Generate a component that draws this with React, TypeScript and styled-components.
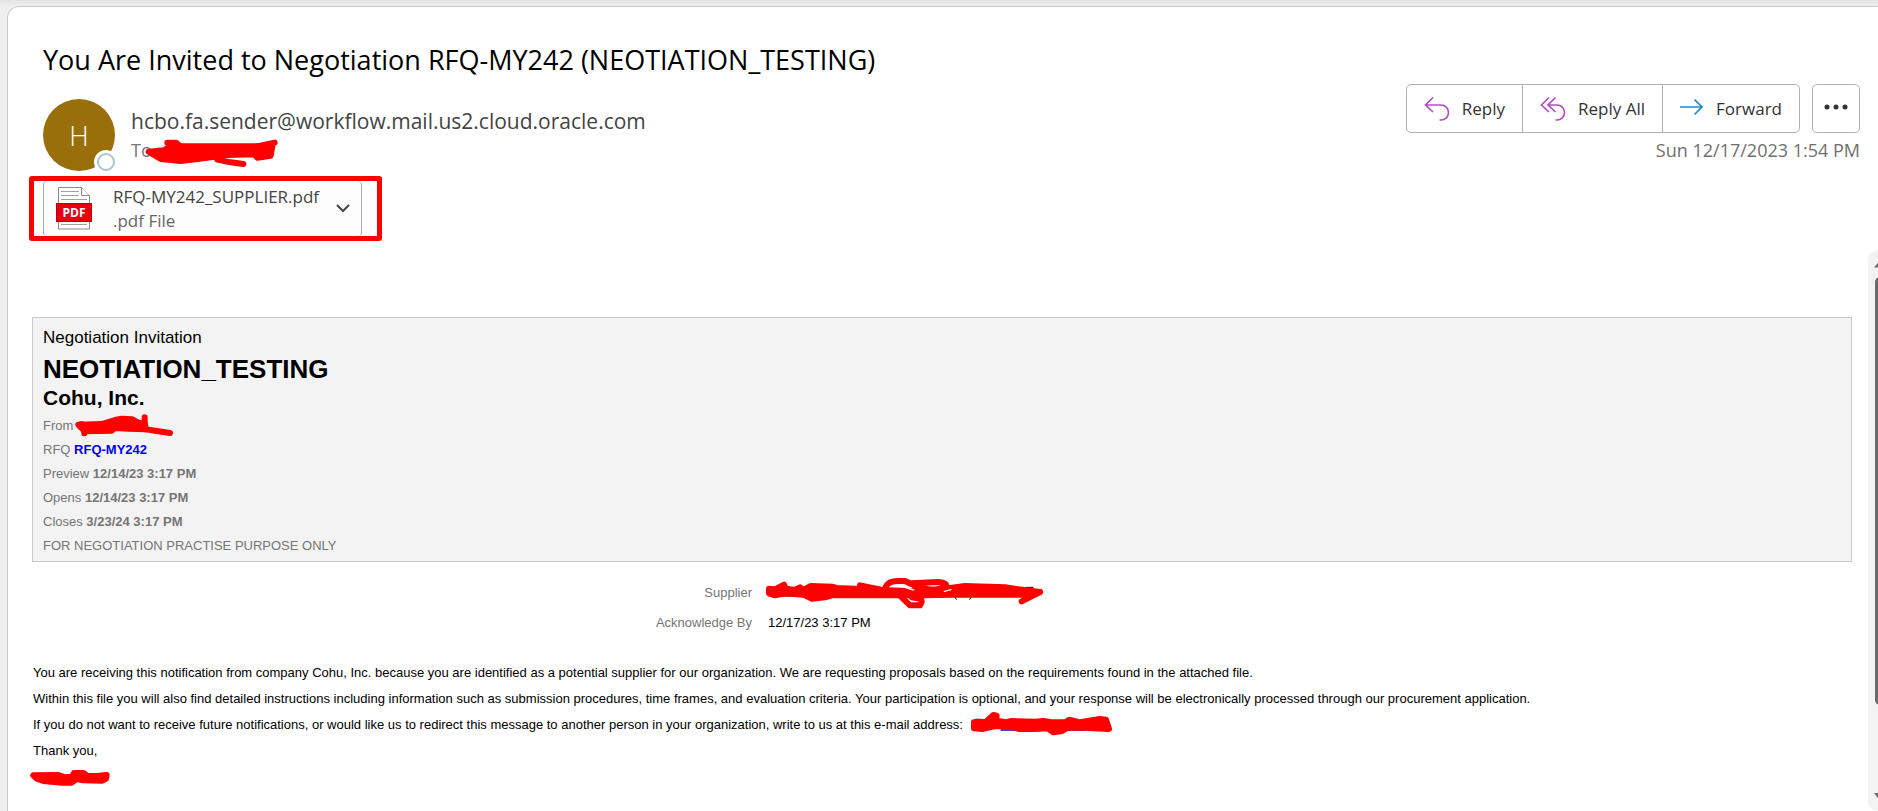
import React from "react";
import styled, { createGlobalStyle } from "styled-components";

const uiFont = `"Open Sans", "Noto Sans", sans-serif`;
const mailFont = `"Liberation Sans", Arial, sans-serif`;
const INK = "#ff0000";

const GlobalStyle = createGlobalStyle`
  *, *::before, *::after { box-sizing: border-box; }
  body { margin: 0; background: #efefef; font-family: ${uiFont}; }
  h1, h2, h3, p, dl, dd { margin: 0; }
  button { font: inherit; color: inherit; cursor: pointer; }
`;

const Page = styled.div`
  display: flex;
  min-height: 100vh;
  padding: 6px 0 0 7px;
  background: linear-gradient(#e2e2e2, #efefef 6px);
  overflow: hidden;
`;

const Panel = styled.main`
  flex: 1;
  min-width: 0;
  display: flex;
  flex-direction: column;
  background: #fff;
  border: solid #cacaca;
  border-width: 1px 0 0 1px;
  border-top-left-radius: 12px;
`;

const Header = styled.header`
  display: flex;
  justify-content: space-between;
  gap: 24px;
  padding: 33px 18px 0 35px;
`;

const Subject = styled.h1`
  font-size: 27px;
  line-height: 40px;
  font-weight: 400;
  color: #000;
`;

const SenderRow = styled.div`
  display: flex;
  gap: 16px;
  margin-top: 19px;
`;

const Avatar = styled.div`
  position: relative;
  display: grid;
  place-items: center;
  width: 72px;
  height: 72px;
  border-radius: 50%;
  background: #986f0b;
  color: #fff;
  font-size: 27px;
  font-weight: 300;
`;

const Presence = styled.span`
  position: absolute;
  right: -3px;
  bottom: -3px;
  width: 24px;
  height: 24px;
  border: 3px solid #fff;
  border-radius: 50%;
  background: #fff;

  &::before {
    content: "";
    display: block;
    width: 18px;
    height: 18px;
    border: 2px solid #a9c4d0;
    border-radius: 50%;
  }
`;

const SenderText = styled.div`
  padding-top: 8px;
`;

const SenderName = styled.p`
  font-size: 21px;
  line-height: 28px;
  color: #444;
`;

const Recipient = styled.p`
  font-size: 18px;
  line-height: 30px;
  color: #767676;
`;

const HeaderSide = styled.div`
  flex: none;
  display: flex;
  flex-direction: column;
  align-items: flex-end;
  padding-top: 44px;
`;

const Actions = styled.div`
  display: flex;
  gap: 12px;
`;

const ActionGroup = styled.div`
  display: flex;
  border: 1px solid #b3b0ad;
  border-radius: 5px;
`;

const ActionButton = styled.button`
  display: flex;
  align-items: center;
  gap: 12px;
  height: 47px;
  padding: 0 17px;
  border: 0;
  background: none;
  font-size: 17px;
  color: #333;

  & + & { border-left: 1px solid #b3b0ad; }
`;

const MoreButton = styled.button`
  display: grid;
  place-items: center;
  width: 48px;
  height: 49px;
  padding: 0 0 4px;
  border: 1px solid #b3b0ad;
  border-radius: 5px;
  background: none;
`;

const SentAt = styled.time`
  margin-top: 3px;
  font-size: 18px;
  line-height: 28px;
  color: #6f6f6f;
`;

const Highlight = styled.div`
  align-self: flex-start;
  margin: 5px 0 0 21px;
  padding: 0 15px 0 9px;
  border: 5px solid ${INK};
  border-radius: 3px;
`;

const Attachment = styled.button`
  display: flex;
  align-items: center;
  width: 319px;
  height: 55px;
  padding: 0 11px 0 12px;
  border: solid #ababab;
  border-width: 0 1px;
  border-radius: 4px;
  background: #fdfdfd;
  text-align: left;
`;

const AttachmentText = styled.span`
  flex: 1;
  margin-left: 21px;
  font-size: 17px;
  line-height: 24px;
  color: #444;
`;

const FileKind = styled.span`
  display: block;
  color: #666;
`;

const BodyArea = styled.div`
  flex: 1;
  display: flex;
  gap: 16px;
  margin-top: 9px;
`;

const MailBody = styled.article`
  flex: 1;
  min-width: 0;
  padding: 67px 0 20px 24px;
  font-family: ${mailFont};
`;

const Card = styled.section`
  padding: 8px 10px 3px;
  border: 1px solid #cacaca;
  background: #f3f3f3;
  color: #000;
`;

const Kicker = styled.p`
  font-size: 17px;
  line-height: 24px;
`;

const CardTitle = styled.h2`
  margin-top: 4px;
  font-size: 26px;
  line-height: 30px;
`;

const Company = styled.h3`
  margin-bottom: 2px;
  font-size: 21px;
  line-height: 28px;
`;

const CardLine = styled.p`
  font-size: 13px;
  line-height: 24px;
  color: #757575;

  a { color: #0000ee; font-weight: 700; text-decoration: none; }
`;

const Details = styled.dl`
  display: grid;
  grid-template-columns: 2fr 3fr;
  margin-top: 16px;
  font-size: 13px;
  line-height: 30px;

  dt { padding-right: 8px; text-align: right; color: #757575; }
  dd { padding-left: 8px; color: #000; }
`;

const Message = styled.div`
  margin-top: 22px;
  padding-left: 1px;
  font-size: 13px;
  line-height: 26px;
  color: #000;
`;

const Scrollbar = styled.div`
  flex: none;
  display: flex;
  flex-direction: column;
  width: 10px;
  padding: 9px 0 9px 6px;
  overflow: hidden;
  background: #f3f3f3;
  border-radius: 10px 0 0 10px;

  svg { flex: none; display: block; }
`;

const Track = styled.div`
  flex: 1;
  margin: 9px 0 6px 1px;
`;

const Thumb = styled.div`
  width: 10px;
  height: 84%;
  border-radius: 5px;
  background: #6b6b6b;
`;

const Anchor = styled.span`
  position: relative;
`;

const Ink = styled.svg<{ $x: number; $y: number }>`
  position: absolute;
  left: ${(p) => p.$x}px;
  top: ${(p) => p.$y}px;
  overflow: visible;

  .solid { fill: ${INK}; }
`;

type MarkProps = {
  x: number;
  y: number;
  w: number;
  h: number;
  children: React.ReactNode;
};

/* Marker scribble, drawn on a grid three times finer than the page. */
const Mark = ({ x, y, w, h, children }: MarkProps) => (
  <Anchor aria-hidden="true">
    <Ink
      $x={x}
      $y={y}
      width={w}
      height={h}
      viewBox={`0 0 ${w * 3} ${h * 3}`}
      fill="none"
      stroke={INK}
      strokeWidth="18"
      strokeLinecap="round"
      strokeLinejoin="round"
    >
      {children}
    </Ink>
  </Anchor>
);

const ReplyIcon = () => (
  <svg width="26" height="26" viewBox="0 0 26 26" fill="none" stroke="#b14fc0" strokeWidth="1.7">
    <path d="M9 1.5 1.5 9 9 16M1.5 9H17a7.5 7.5 0 0 1 0 15h-1.5" />
  </svg>
);

const ReplyAllIcon = () => (
  <svg width="26" height="26" viewBox="0 0 26 26" fill="none" stroke="#b14fc0" strokeWidth="1.7">
    <path d="M9 1.5 1.5 9 9 16M15.5 1.5 8 9l7.5 7M8 9h9a7.500 7.500 0 0 1 0 15h-1.500" />
  </svg>
);

const ForwardIcon = () => (
  <svg width="24" height="26" viewBox="0 0 24 26" fill="none" stroke="#1e8bcd" strokeWidth="1.7">
    <path d="M0 11h22M14.500 3.500 22 11l-7.500 7.500" />
  </svg>
);

const PdfIcon = () => (
  <svg width="36" height="43" viewBox="0 0 36 43">
    <path d="M2.500 .5h23l8 8v33.500h-31z" fill="#fff" stroke="#8a8a8a" />
    <path d="M25.500 .5v8h8" fill="#fff" stroke="#8a8a8a" />
    <path d="M5 4.500h18M5 8.500h18M5 12.500h26M5 37.500h26" stroke="#a0a0a0" />
    <rect x="0.500" y="16.500" width="35" height="18" fill="#e8000f" stroke="#b8000c" />
    <text x="18" y="30" textAnchor="middle" fontSize="12" fontWeight="700" fill="#fff">
      PDF
    </text>
  </svg>
);

export default function App() {
  return (
    <>
      <GlobalStyle />
      <Page>
        <Panel>
          <Header>
            <div>
              <Subject>You Are Invited to Negotiation RFQ-MY242 (NEOTIATION_TESTING)</Subject>
              <SenderRow>
                <Avatar>
                  H
                  <Presence />
                </Avatar>
                <SenderText>
                  <SenderName>hcbo.fa.sender@workflow.mail.us2.cloud.oracle.com</SenderName>
                  <Recipient>
                    <Mark x={13} y={1} w={134} h={28}>
                      <path
                        className="solid"
                        d="M14 38 60 34 75 24 110 22H385L380 50 340 56 330 46 250 48 160 60 110 66 50 60 30 48z"
                      />
                      <path d="M70 11H96L112 24M330 24 392 11M220 62 260 70 298 75" />
                    </Mark>
                    To
                  </Recipient>
                </SenderText>
              </SenderRow>
            </div>
            <HeaderSide>
              <Actions>
                <ActionGroup>
                  <ActionButton type="button">
                    <ReplyIcon />
                    Reply
                  </ActionButton>
                  <ActionButton type="button">
                    <ReplyAllIcon />
                    Reply All
                  </ActionButton>
                  <ActionButton type="button">
                    <ForwardIcon />
                    Forward
                  </ActionButton>
                </ActionGroup>
                <MoreButton type="button" aria-label="More actions">
                  <svg width="24" height="6" viewBox="0 0 24 6" fill="#333">
                    <circle cx="3" cy="3" r="2.500" />
                    <circle cx="12" cy="3" r="2.500" />
                    <circle cx="21" cy="3" r="2.500" />
                  </svg>
                </MoreButton>
              </Actions>
              <SentAt dateTime="2023-12-17T13:54">Sun 12/17/2023 1:54 PM</SentAt>
            </HeaderSide>
          </Header>

          <Highlight>
            <Attachment type="button">
              <PdfIcon />
              <AttachmentText>
                RFQ-MY242_SUPPLIER.pdf
                <FileKind>.pdf File</FileKind>
              </AttachmentText>
              <svg width="14" height="9" viewBox="0 0 14 9" fill="none" stroke="#444" strokeWidth="2">
                <path d="M1 1l6 6 6-6" />
              </svg>
            </Attachment>
          </Highlight>

          <BodyArea>
            <MailBody>
              <Card>
                <Kicker>Negotiation Invitation</Kicker>
                <CardTitle>NEOTIATION_TESTING</CardTitle>
                <Company>Cohu, Inc.</Company>
                <CardLine>
                  <Mark x={32} y={-4} w={98} h={24}>
                    <path
                      className="solid"
                      d="M10 32 80 30 120 18 140 14 172 16 190 26 210 30 212 46 160 44 120 42 110 50 30 52z"
                    />
                    <path d="M26 40 28 58M209 10V30M190 42 240 50 285 57" />
                  </Mark>
                  From <b>S</b>
                </CardLine>
                <CardLine>
                  RFQ <a href="#rfq">RFQ-MY242</a>
                </CardLine>
                <CardLine>
                  Preview <b>12/14/23 3:17 PM</b>
                </CardLine>
                <CardLine>
                  Opens <b>12/14/23 3:17 PM</b>
                </CardLine>
                <CardLine>
                  Closes <b>3/23/24 3:17 PM</b>
                </CardLine>
                <CardLine>FOR NEGOTIATION PRACTISE PURPOSE ONLY</CardLine>
              </Card>

              <Details>
                <dt>Supplier</dt>
                <dd>
                  <Mark x={-3} y={-7} w={280} h={32}>
                    <path
                      stroke="#000"
                      strokeWidth="3"
                      d="M50 54h36M256 28h26M574 44q-10 10 0 20M614 44q10 10 0 20M784 28h20"
                    />
                    <path
                      className="solid"
                      d="M12 32 30 34 57 20 62 32 90 36 105 28 115 36 138 24 200 26 215 30 300 34 440 40 540 32 600 24 720 28 760 34 825 42 780 50H560L470 52H200L180 58 140 62 115 50 60 46 30 52 12 46z"
                    />
                    <path d="M285 22 345 34M362 26Q370 9 400 9H420L460 28 530 40M440 16 520 12Q545 14 545 24L520 34M410 58 435 82H465Q474 70 466 62L440 58M825 42 770 70" />
                    <path stroke="#fff" strokeWidth="4" d="M412 26 446 36M538 40l20-5" />
                  </Mark>
                  &nbsp;
                </dd>
                <dt>Acknowledge By</dt>
                <dd>12/17/23 3:17 PM</dd>
              </Details>

              <Message>
                <p>
                  You are receiving this notification from company Cohu, Inc. because you are identified as a
                  potential supplier for our organization. We are requesting proposals based on the requirements
                  found in the attached file.
                </p>
                <p>
                  Within this file you will also find detailed instructions including information such as
                  submission procedures, time frames, and evaluation criteria. Your participation is optional, and
                  your response will be electronically processed through our procurement application.
                </p>
                <p>
                  If you do not want to receive future notifications, or would like us to redirect this message to
                  another person in your organization, write to us at this e-mail address:
                  <Mark x={7} y={-6} w={146} h={24}>
                    <path stroke="#0000ee" strokeWidth="4" d="M16 25h18M93 57h250" />
                    <path
                      className="solid"
                      d="M12 34 48 32 70 12 80 14 78 28 110 34 122 30 196 32 220 30 245 34 286 34 298 26 330 34 390 24 408 26 417 54 342 50 294 50 276 60 250 64 232 52 196 54 146 54 122 46 73 46 36 54 12 52z"
                    />
                  </Mark>
                </p>
                <p>Thank you,</p>
                <p>
                  <Mark x={-3} y={1} w={80} h={18}>
                    <path
                      className="solid"
                      d="M10 16 85 15 105 22 125 20 132 9H160L172 17 200 18 230 15 228 26 215 32 160 31 140 27 125 38H95L40 33 20 26z"
                    />
                  </Mark>
                  &nbsp;
                </p>
              </Message>
            </MailBody>
            <Scrollbar aria-hidden="true">
              <svg width="14" height="9" viewBox="0 0 14 9" fill="#6b6b6b">
                <path d="M0 8.500 7 0l7 8.500z" />
              </svg>
              <Track>
                <Thumb />
              </Track>
              <svg width="14" height="9" viewBox="0 0 14 9" fill="#6b6b6b">
                <path d="M0 0h14L7 9z" />
              </svg>
            </Scrollbar>
          </BodyArea>
        </Panel>
      </Page>
    </>
  );
}
